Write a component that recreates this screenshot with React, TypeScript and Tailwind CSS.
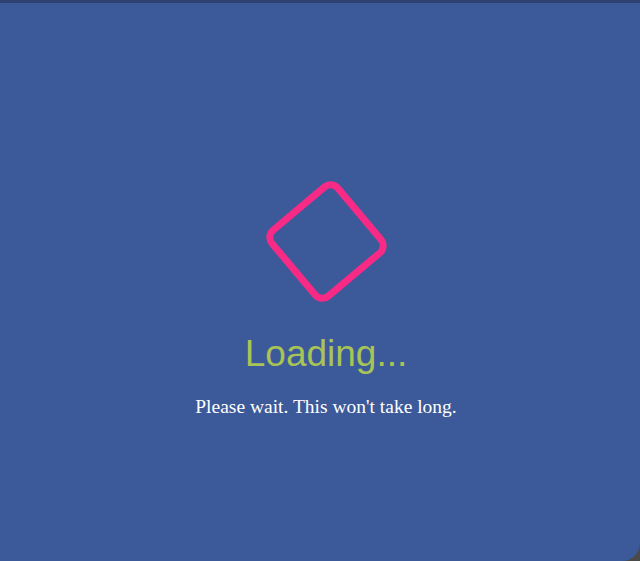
import React from "react";

export default function App() {
  return (
    <div className="w-full h-[561px] bg-[#4a4a48] overflow-hidden">
      <div className="w-full h-full bg-[#3c5a99] border-t-[3px] border-[#2d4272] rounded-br-[18px] flex flex-col items-center pt-[178px] pl-[12px]">
        <div className="w-[120px] h-[120px] flex items-center justify-center">
          <div className="w-[93px] h-[93px] shrink-0 border-[7px] border-[#f72a86] rounded-[13px] rotate-[50deg]" />
        </div>
        <div
          className="mt-[33px] text-[37px] leading-[40px] text-[#a9c456]"
          style={{ fontFamily: '"Liberation Sans", Arial, sans-serif' }}
        >
          Loading...
        </div>
        <div
          className="mt-[21px] text-[19.5px] leading-[24px] text-white"
          style={{ fontFamily: '"Liberation Serif", "Times New Roman", serif' }}
        >
          Please wait. This won't take long.
        </div>
      </div>
    </div>
  );
}
